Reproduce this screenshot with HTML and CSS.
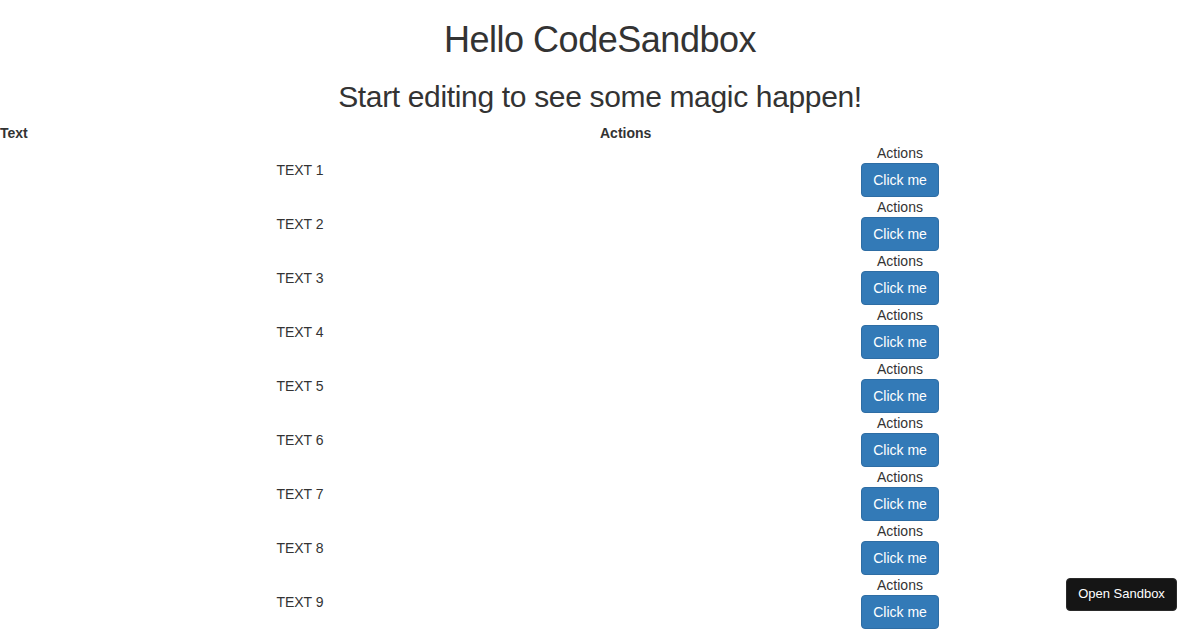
FILE: index.html
```html
<!DOCTYPE html>
<html>
<head>
<meta charset="utf-8">
<link rel="stylesheet" href="styles.css">
</head>
<body>
<div class="app">
  <h1>Hello CodeSandbox</h1>
  <h2>Start editing to see some magic happen!</h2>
  <table class="grid">
    <thead>
      <tr><th>Text</th><th>Actions</th></tr>
    </thead>
    <tbody>
      <tr><td>TEXT 1</td><td><div>Actions</div><button class="btn">Click me</button></td></tr>
      <tr><td>TEXT 2</td><td><div>Actions</div><button class="btn">Click me</button></td></tr>
      <tr><td>TEXT 3</td><td><div>Actions</div><button class="btn">Click me</button></td></tr>
      <tr><td>TEXT 4</td><td><div>Actions</div><button class="btn">Click me</button></td></tr>
      <tr><td>TEXT 5</td><td><div>Actions</div><button class="btn">Click me</button></td></tr>
      <tr><td>TEXT 6</td><td><div>Actions</div><button class="btn">Click me</button></td></tr>
      <tr><td>TEXT 7</td><td><div>Actions</div><button class="btn">Click me</button></td></tr>
      <tr><td>TEXT 8</td><td><div>Actions</div><button class="btn">Click me</button></td></tr>
      <tr><td>TEXT 9</td><td><div>Actions</div><button class="btn">Click me</button></td></tr>
    </tbody>
  </table>
</div>
<a class="open-sandbox">Open Sandbox</a>
</body>
</html>
```
FILE: styles.css
```css
html, body {
  margin: 0;
  padding: 0;
  overflow: hidden;
}
body {
  font-family: "Liberation Sans", Arial, sans-serif;
  font-size: 14px;
  line-height: 1.42857143;
  color: #333;
  background: #fff;
}
.app {
  text-align: center;
}
h1, h2 {
  font-weight: 500;
  line-height: 1.1;
  margin: 20px 0 10px;
}
h1 { font-size: 36px; letter-spacing: -0.47px; }
h2 { font-size: 30px; letter-spacing: -0.34px; }
.grid {
  width: 100%;
  border-collapse: collapse;
  border-spacing: 0;
}
.grid th {
  text-align: left;
  font-weight: bold;
  padding: 0;
  width: 50%;
}
.grid td {
  padding: 0;
  text-align: center;
  vertical-align: middle;
}
.btn {
  display: inline-block;
  font-family: inherit;
  font-size: 14px;
  line-height: 1.42857143;
  padding: 6px 11px;
  color: #fff;
  background: #337ab7;
  border: 1px solid #2e6da4;
  border-radius: 4px;
  margin: 0;
  cursor: pointer;
  vertical-align: middle;
}
.open-sandbox {
  position: fixed;
  right: 23px;
  bottom: 19px;
  width: 111px;
  height: 33px;
  box-sizing: border-box;
  display: flex;
  align-items: center;
  justify-content: center;
  background: #151515;
  color: #fff;
  font-family: "Liberation Sans", Arial, sans-serif;
  font-size: 13px;
  border-radius: 4px;
  border: 1px solid #2a2a2a;
}
```
